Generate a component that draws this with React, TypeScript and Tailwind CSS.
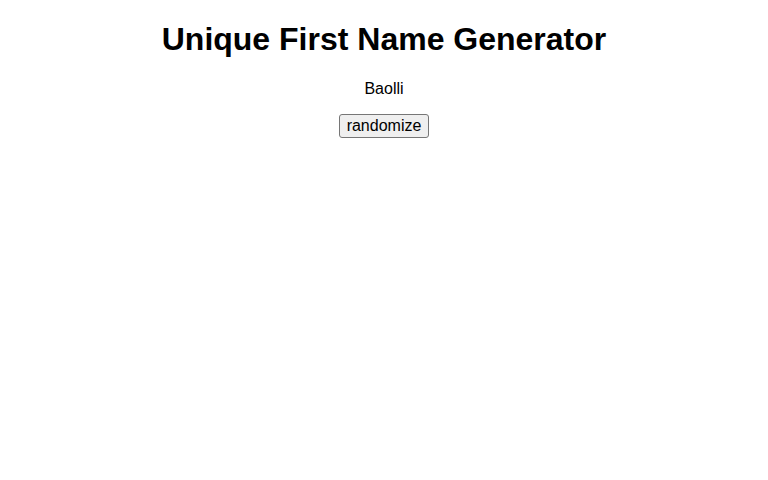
import React, { useState } from 'react';

const syllables = ['ba', 'ol', 'li', 'ka', 'ren', 'mi', 'to', 'sa', 'vel', 'no', 'ri', 'da'];

const makeName = () => {
  const count = 2 + Math.floor(Math.random() * 2);
  let name = '';
  for (let i = 0; i < count; i++) {
    name += syllables[Math.floor(Math.random() * syllables.length)];
  }
  return name.charAt(0).toUpperCase() + name.slice(1);
};

export default function App() {
  const [name, setName] = useState('Baolli');

  return (
    <div className="min-h-screen bg-white text-black text-center font-['Liberation_Sans',Arial,sans-serif]">
      <h1 className="pt-[21px] text-[32px] leading-[37px] font-bold">Unique First Name Generator</h1>
      <p className="mt-[22px] text-base leading-[18px]">{name}</p>
      <button
        onClick={() => setName(makeName())}
        className="mt-4 px-[7px] py-[2px] text-base leading-[18px] bg-[#efefef] border border-[#767676] rounded-[3px] hover:bg-[#e5e5e5]"
      >
        randomize
      </button>
    </div>
  );
}
